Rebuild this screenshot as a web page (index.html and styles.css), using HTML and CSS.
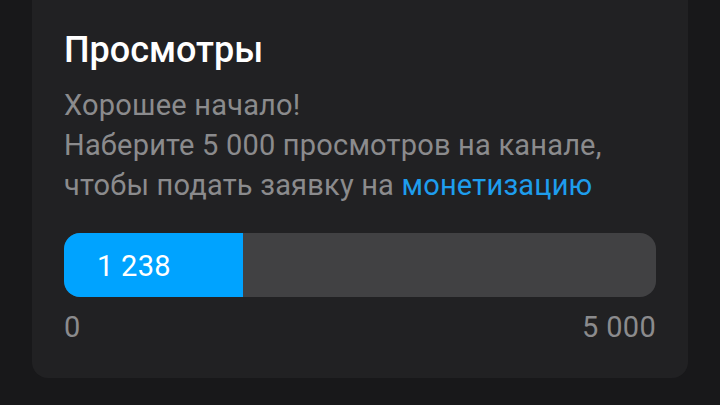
FILE: index.html
```html
<!DOCTYPE html>
<html lang="ru">
<head>
<meta charset="utf-8">
<link rel="stylesheet" href="styles.css">
</head>
<body>
<div class="card">
  <h1 class="title">Просмотры</h1>
  <p class="desc">Хорошее начало!<br>Наберите 5&nbsp;000 просмотров на канале,<br>чтобы подать заявку на <a class="link">монетизацию</a></p>
  <div class="bar">
    <div class="fill" style="width: 179px"><span class="value">1 238</span></div>
  </div>
  <div class="scale"><span>0</span><span>5 000</span></div>
</div>
</body>
</html>
```
FILE: styles.css
```css
html, body { margin: 0; padding: 0; }
body {
  background: #18181a;
  width: 720px;
  height: 405px;
  overflow: hidden;
  font-family: Roboto, "Noto Sans", sans-serif;
}
.card {
  box-sizing: border-box;
  margin: -16px 0 0 32px;
  width: 656px;
  height: 394px;
  background: #212123;
  border-radius: 16px;
  padding: 32px 32px 0 32px;
  display: flex;
  flex-direction: column;
}
.title {
  margin: 0;
  font-size: 36px;
  font-weight: 500;
  color: #ffffff;
  line-height: 42px;
  padding-top: 13px;
}
.desc {
  margin: 14px 0 0 0;
  font-size: 29px;
  line-height: 40px;
  color: #8b8b8d;
  letter-spacing: 0.2px;
}
.link { color: #1e9ded; }
.bar {
  margin-top: 28px;
  height: 64px;
  background: #414143;
  border-radius: 16px;
  overflow: hidden;
  display: flex;
  flex-shrink: 0;
}
.fill {
  background: #00a3ff;
  display: flex;
  align-items: center;
  padding-left: 33px;
  box-sizing: border-box;
}
.value {
  color: #ffffff;
  font-size: 29px;
  letter-spacing: 0.3px;
  line-height: 40px;
  padding-top: 2px;
}
.scale {
  display: flex;
  justify-content: space-between;
  margin-top: 10px;
  font-size: 29px;
  line-height: 40px;
  color: #8b8b8d;
  letter-spacing: 0.3px;
}
```
